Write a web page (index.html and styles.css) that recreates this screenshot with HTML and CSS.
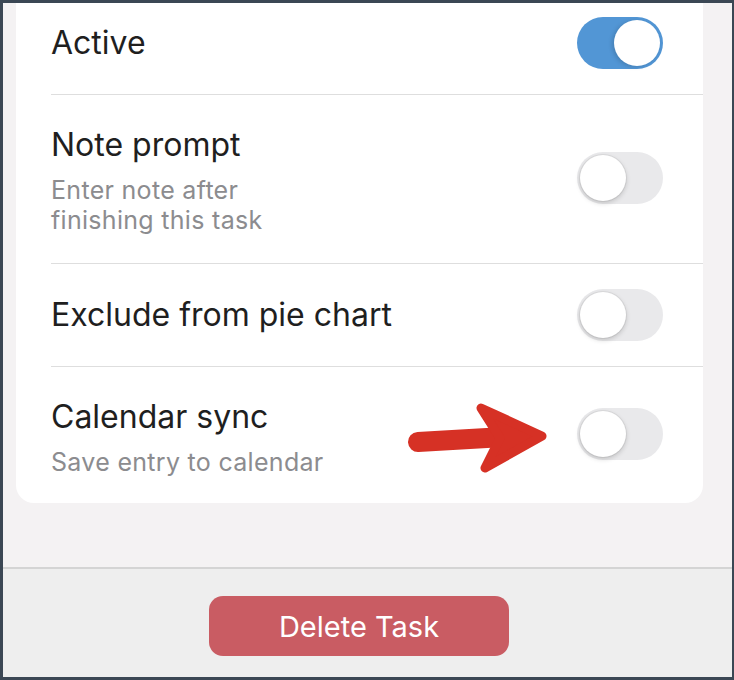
FILE: index.html
```html
<!DOCTYPE html>
<html lang="en">
<head>
    <meta charset="utf-8">
    <meta name="viewport" content="width=device-width, initial-scale=1.0">
    <title>Edit Task</title>
    <link rel="stylesheet" href="styles.css">
</head>
<body>
    <div class="device">
        <div class="content">
            <div class="card">
                <div class="row row-first">
                    <div class="row-text">
                        <div class="row-title">Active</div>
                    </div>
                    <div class="toggle on"><span class="knob"></span></div>
                </div>

                <div class="row row-note">
                    <div class="row-text">
                        <div class="row-title">Note prompt</div>
                        <div class="row-sub">Enter note after<br>finishing this task</div>
                    </div>
                    <div class="toggle"><span class="knob"></span></div>
                </div>

                <div class="row">
                    <div class="row-text">
                        <div class="row-title">Exclude from pie chart</div>
                    </div>
                    <div class="toggle"><span class="knob"></span></div>
                </div>

                <div class="row row-last">
                    <div class="row-text">
                        <div class="row-title">Calendar sync</div>
                        <div class="row-sub">Save entry to calendar</div>
                    </div>
                    <div class="toggle"><span class="knob"></span></div>
                </div>
            </div>
        </div>

        <div class="bottom-bar">
            <button class="delete-btn">Delete Task</button>
        </div>

        <!-- red pointer over the calendar switch -->
        <svg class="pointer" width="160" height="90" viewBox="0 0 160 90">
            <line x1="18" y1="47" x2="104" y2="42" stroke="#d63125" stroke-width="20" stroke-linecap="round"/>
            <polygon points="81,13 142,41 85,73 100,43" fill="#d63125" stroke="#d63125" stroke-width="9" stroke-linejoin="round"/>
        </svg>
    </div>
</body>
</html>
```

FILE: styles.css
```css
body {
    margin: 0;
    font-family: Inter, "Noto Sans", sans-serif;
}

.device {
    position: relative;
    width: 734px;
    height: 680px;
    box-sizing: border-box;
    border: 3px solid #3b4754;
    border-right-width: 2px;
    display: flex;
    flex-direction: column;
    overflow: hidden;
}

.content {
    flex: 1;
    background: #f4f2f3;
    padding: 0 29px 0 13px;
}

.card {
    margin-top: -11px;
    background: #fff;
    border-radius: 0 0 18px 18px;
}

.row {
    display: flex;
    align-items: center;
    margin-left: 35px;
    padding: 25px 40px 25px 0;
    border-bottom: 1px solid #dedede;
}

.row-note {
    padding: 32px 40px 28px 0;
}

.row-last {
    padding: 32px 40px 26px 0;
    border-bottom: none;
}

.row-note .toggle {
    margin-bottom: 6px;
}

.row-last .toggle {
    margin-bottom: 8px;
}

.row-text {
    flex: 1;
}

.row-title {
    font-size: 32px;
    line-height: 36px;
    color: #1f1f1f;
}

.row-sub {
    margin-top: 12px;
    font-size: 25px;
    line-height: 30px;
    letter-spacing: 0.3px;
    color: #8c8c8f;
}

.toggle {
    position: relative;
    width: 86px;
    height: 52px;
    border-radius: 26px;
    background: #e9e9eb;
}

.toggle .knob {
    position: absolute;
    top: 3px;
    left: 3px;
    width: 46px;
    height: 46px;
    border-radius: 50%;
    background: #fff;
    box-shadow: 0 2px 5px rgba(0, 0, 0, 0.18), 0 0 0 1px rgba(0, 0, 0, 0.05);
}

.toggle.on {
    background: #5296d5;
}

.toggle.on .knob {
    left: 37px;
    box-shadow: -2px 1px 4px rgba(0, 0, 0, 0.15);
}

.bottom-bar {
    height: 110px;
    box-sizing: border-box;
    background: #eeeeee;
    border-top: 2px solid #d4d4d4;
    display: flex;
    padding: 27px 0 0 206px;
}

.delete-btn {
    width: 300px;
    height: 60px;
    border: none;
    border-radius: 14px;
    background: #c95c63;
    color: #fff;
    font-family: Inter, "Noto Sans", sans-serif;
    font-size: 29px;
}

.pointer {
    position: absolute;
    left: 397px;
    top: 392px;
}
```
